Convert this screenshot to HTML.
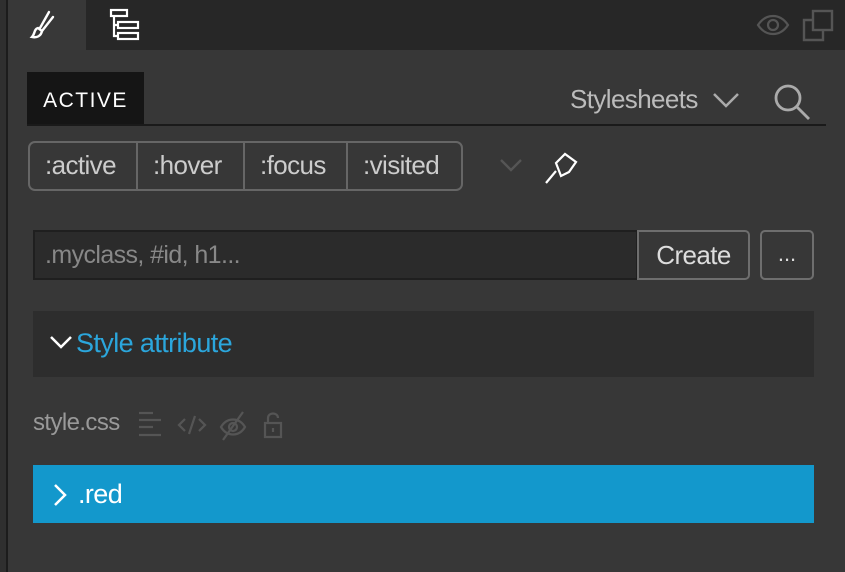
<!DOCTYPE html>
<html><head><meta charset="utf-8"><style>
*{margin:0;padding:0;box-sizing:border-box}
body{width:845px;height:572px;background:#373737;position:relative;overflow:hidden;font-family:"Liberation Sans",sans-serif}
.a{position:absolute}
.t{letter-spacing:-0.6px}
</style></head><body>
<div class="a" style="left:0;top:0;width:7px;height:572px;background:#2f2f2f"></div>
<div class="a" style="left:6px;top:0;width:2px;height:572px;background:#1c1c1c"></div>
<div class="a" style="left:8px;top:0;width:837px;height:50px;background:#272727"></div>
<div class="a" style="left:8px;top:0;width:78px;height:50px;background:#383838"></div>
<svg class="a" style="left:28px;top:8px" width="36" height="32" viewBox="0 0 36 32" fill="none" stroke="#fff" stroke-width="2.4" stroke-linecap="round"><path d="M4 29c5 1 9-1 10-6l-4-3c-4 1-3 6-6 9z"/><path d="M12 20l9-16M14 23l11-14"/></svg>
<svg class="a" style="left:108px;top:7px" width="34" height="34" viewBox="0 0 34 34" fill="none" stroke="#fff" stroke-width="2.2"><rect x="3" y="3" width="16" height="6"/><rect x="10" y="15" width="20" height="6"/><rect x="10" y="26" width="20" height="6"/><path d="M6 9v20h4M6 18h4"/></svg>
<svg class="a" style="left:756px;top:12px" width="34" height="26" viewBox="0 0 34 26" fill="none" stroke="#555" stroke-width="2.2"><path d="M2 13c8-12 22-12 30 0c-8 12-22 12-30 0z"/><circle cx="17" cy="13" r="5"/></svg>
<svg class="a" style="left:801px;top:8px" width="34" height="34" viewBox="0 0 34 34" fill="none" stroke="#555" stroke-width="2.4"><rect x="12" y="3" width="19" height="19"/><path d="M12 12H3v20h19v-10"/></svg>

<div class="a" style="left:27px;top:72px;width:117px;height:53px;background:#151515;color:#fff;font-size:21px;letter-spacing:1.5px;line-height:57px;text-align:center">ACTIVE</div>
<div class="a" style="left:27px;top:124px;width:799px;height:2px;background:#1a1a1a"></div>
<div class="a t" style="left:570px;top:84px;font-size:26px;color:#bbb">Stylesheets</div>
<svg class="a" style="left:711px;top:91px" width="30" height="18" viewBox="0 0 30 18" fill="none" stroke="#aaa" stroke-width="2.5"><path d="M3 3l12 12l12-12"/></svg>
<svg class="a" style="left:770px;top:82px" width="44" height="40" viewBox="0 0 44 40" fill="none" stroke="#aaa" stroke-width="2.8"><circle cx="18" cy="16" r="12"/><path d="M27 25l12 12"/></svg>

<div class="a" style="left:28px;top:141px;width:435px;height:50px;border:2px solid #666;border-radius:7px"></div>
<div class="a" style="left:136px;top:142px;width:2px;height:48px;background:#666"></div>
<div class="a" style="left:243px;top:142px;width:2px;height:48px;background:#666"></div>
<div class="a" style="left:346px;top:142px;width:2px;height:48px;background:#666"></div>
<div class="a t" style="left:45px;top:150px;font-size:26px;color:#ccc">:active</div>
<div class="a t" style="left:153px;top:150px;font-size:26px;color:#ccc">:hover</div>
<div class="a t" style="left:260px;top:150px;font-size:26px;color:#ccc">:focus</div>
<div class="a t" style="left:363px;top:150px;font-size:26px;color:#ccc">:visited</div>
<svg class="a" style="left:498px;top:157px" width="26" height="16" viewBox="0 0 26 16" fill="none" stroke="#555" stroke-width="2.4"><path d="M3 3l10 10l10-10"/></svg>
<svg class="a" style="left:543px;top:150px" width="38" height="36" viewBox="0 0 38 36" fill="none" stroke="#fff" stroke-width="2.2"><path d="M3 33l10-12M13 13l9-9l11 8l-7 10l-8 4z"/></svg>

<div class="a" style="left:33px;top:230px;width:605px;height:50px;background:#2b2b2b;border:2px solid #1f1f1f"></div>
<div class="a t" style="left:45px;top:241px;font-size:25px;color:#888">.myclass, #id, h1...</div>
<div class="a" style="left:637px;top:230px;width:113px;height:50px;border:2px solid #6e6e6e;border-radius:0 5px 5px 0;color:#ddd;font-size:26px;text-align:center;line-height:46px;letter-spacing:-0.6px">Create</div>
<div class="a" style="left:760px;top:230px;width:54px;height:50px;border:2px solid #6e6e6e;border-radius:5px;color:#ddd;font-size:22px;text-align:center;line-height:44px">...</div>

<div class="a" style="left:33px;top:311px;width:781px;height:66px;background:#2d2d2d"></div>
<svg class="a" style="left:48px;top:334px" width="26" height="16" viewBox="0 0 26 16" fill="none" stroke="#fff" stroke-width="2.5"><path d="M3 3l10 10l10-10"/></svg>
<div class="a t" style="left:76px;top:328px;font-size:27px;color:#2ba6dc">Style attribute</div>

<div class="a t" style="left:33px;top:409px;font-size:24px;color:#999">style.css</div>
<svg class="a" style="left:135px;top:408px" width="160" height="34" viewBox="0 0 160 34" fill="none" stroke="#555" stroke-width="2.2"><path d="M4 5h14M4 12h22M4 19h14M4 27h22"/><path d="M50 11l-6 6l6 6M64 11l6 6l-6 6M60 8l-6 18"/><path d="M86 19c6-10 18-10 24 0c-6 10-18 10-24 0z"/><circle cx="98" cy="19" r="4"/><path d="M88 32l20-28"/><rect x="130" y="15" width="16" height="14"/><path d="M133 15v-5c0-6 10-6 10 0"/><path d="M138 20v4"/></svg>

<div class="a" style="left:33px;top:465px;width:781px;height:58px;background:#1398cc"></div>
<svg class="a" style="left:52px;top:482px" width="16" height="26" viewBox="0 0 16 26" fill="none" stroke="#fff" stroke-width="2.5"><path d="M3 3l10 10l-10 10"/></svg>
<div class="a t" style="left:78px;top:479px;font-size:27px;color:#fff">.red</div>
</body></html>
